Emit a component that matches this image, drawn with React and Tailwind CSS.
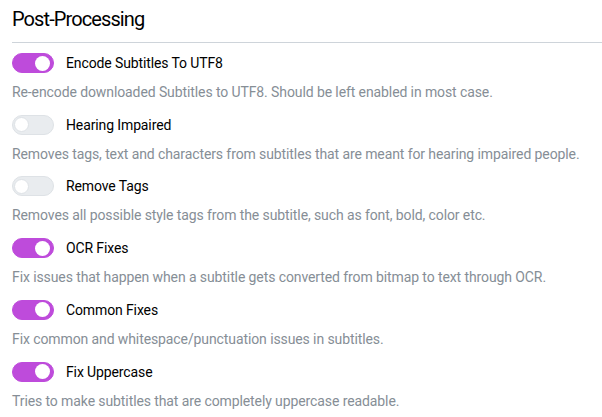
import React from "react";

const options = [
  { label: "Encode Subtitles To UTF8", desc: "Re-encode downloaded Subtitles to UTF8. Should be left enabled in most case.", on: true },
  { label: "Hearing Impaired", desc: "Removes tags, text and characters from subtitles that are meant for hearing impaired people.", on: false },
  { label: "Remove Tags", desc: "Removes all possible style tags from the subtitle, such as font, bold, color etc.", on: false },
  { label: "OCR Fixes", desc: "Fix issues that happen when a subtitle gets converted from bitmap to text through OCR.", on: true },
  { label: "Common Fixes", desc: "Fix common and whitespace/punctuation issues in subtitles.", on: true },
  { label: "Fix Uppercase", desc: "Tries to make subtitles that are completely uppercase readable.", on: true },
];

const Toggle = ({ on }) => (
  <div
    className={`flex h-[20px] w-[42px] shrink-0 items-center rounded-full border ${
      on ? "justify-end border-[#be4bdb] bg-[#be4bdb] pr-[3px]" : "justify-start border-[#dee2e6] bg-[#e9ecef] pl-[1px]"
    }`}
  >
    <div className={`h-[15px] w-[15px] rounded-full bg-white ${on ? "" : "border border-[#dee2e6]"}`} />
  </div>
);

export default function App() {
  return (
    <div className="min-h-screen bg-white pl-3 pt-[4px] font-['Roboto',sans-serif]">
      <h2 className="text-[20px] leading-[31px] tracking-[-0.9px] text-black">Post-Processing</h2>
      <div className="mt-[7px] border-b border-[#ced4da]" />
      <div className="pt-[10px]">
        {options.map((o) => (
          <div key={o.label} className="pb-[11px]">
            <div className="flex items-center gap-3">
              <Toggle on={o.on} />
              <span className="text-[14px] leading-[20px] tracking-[-0.12px] text-black">{o.label}</span>
            </div>
            <p className="mt-[9px] whitespace-nowrap text-[14px] leading-[21.7px] tracking-[-0.1px] text-[#868e96]">
              {o.desc}
            </p>
          </div>
        ))}
      </div>
    </div>
  );
}
